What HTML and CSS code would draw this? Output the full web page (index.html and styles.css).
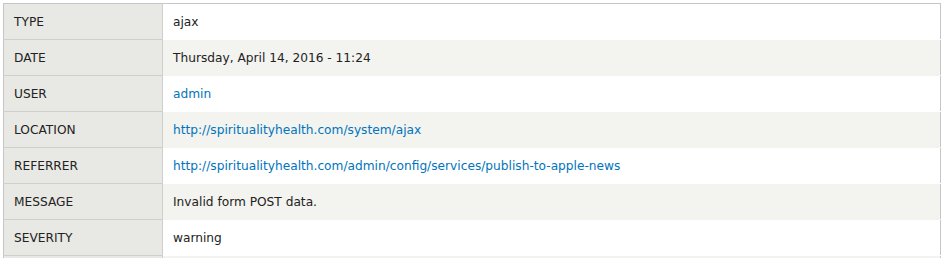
FILE: index.html
```html
<!DOCTYPE html>
<html>
<head>
<meta charset="utf-8">
<link rel="stylesheet" href="styles.css">
</head>
<body>
<table class="details">
  <tbody>
    <tr><th>TYPE</th><td>ajax</td></tr>
    <tr class="even"><th>DATE</th><td>Thursday, April 14, 2016 - 11:24</td></tr>
    <tr><th>USER</th><td><a href="#">admin</a></td></tr>
    <tr class="even"><th>LOCATION</th><td><a href="#">http://spiritualityhealth.com/system/ajax</a></td></tr>
    <tr><th>REFERRER</th><td><a href="#">http://spiritualityhealth.com/admin/config/services/publish-to-apple-news</a></td></tr>
    <tr class="even"><th>MESSAGE</th><td>Invalid form POST data.</td></tr>
    <tr><th>SEVERITY</th><td>warning</td></tr>
    <tr class="even"><th></th><td></td></tr>
  </tbody>
</table>
</body>
</html>
```
FILE: styles.css
```css
html, body {
  margin: 0;
  padding: 0;
  background: #fff;
}
body {
  padding: 3px 0 0 3px;
  font-family: "DejaVu Sans", Verdana, sans-serif;
  font-size: 12.2px;
  color: #222;
}
.details {
  border-collapse: collapse;
  width: 938px;
  border: 1px solid #c6c6c6;
}
.details th {
  width: 138px;
  text-align: left;
  font-weight: normal;
  background: #e8e8e4;
  border-bottom: 1px solid #cfcfcb;
  border-right: 1px solid #cfcfcb;
  padding: 0 10px;
  height: 35px;
  vertical-align: middle;
}
.details td {
  padding: 0 10px;
  height: 35px;
  border-bottom: 1px solid transparent;
  vertical-align: middle;
}
.details tr.even td {
  background: #f3f3ef;
}
.details a {
  color: #0074bd;
  text-decoration: none;
}
```
